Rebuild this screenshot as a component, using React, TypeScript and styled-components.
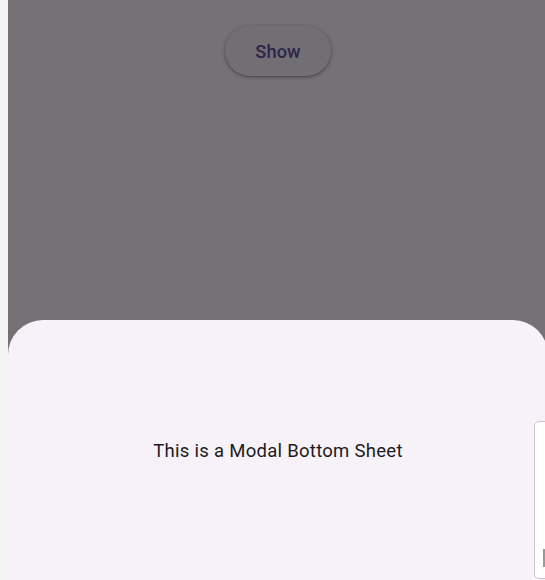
import * as React from 'react';
import styled, { createGlobalStyle } from 'styled-components';

const GlobalStyle = createGlobalStyle`
    html, body {
        margin: 0;
        padding: 0;
        background: #f4f4f4;
        overflow: hidden;
    }
    #root {
        padding-left: 8px;
    }
`;

const Frame = styled.div`
    position: relative;
    display: flex;
    flex-direction: column;
    width: 540px;
    height: 580px;
    overflow: hidden;
    background: #fef7ff;
    font-family: Roboto, "Noto Sans", sans-serif;
`;

const Content = styled.div`
    flex: 1;
    display: flex;
    flex-direction: column;
    align-items: center;
    padding-top: 26px;
`;

const ElevatedButton = styled.button`
    height: 50px;
    padding: 0 30px;
    border: none;
    border-radius: 25px;
    background: #f7f2fa;
    color: #6750a4;
    font-family: Roboto, "Noto Sans", sans-serif;
    font-size: 18.2px;
    font-weight: 500;
    letter-spacing: 0.12px;
    box-shadow: 0 1px 2px rgba(0, 0, 0, 0.3), 0 1px 4px 1px rgba(0, 0, 0, 0.15);
    cursor: pointer;
`;

const Scrim = styled.div`
    position: absolute;
    inset: 0;
    background: rgba(0, 0, 0, 0.54);
`;

const Sheet = styled.div`
    position: relative;
    z-index: 1;
    height: 260px;
    padding-top: 3px;
    box-sizing: border-box;
    background: #f7f2fa;
    border-radius: 35px 35px 0 0;
    display: flex;
    align-items: center;
    justify-content: center;
`;

const SheetText = styled.span`
    font-size: 18.5px;
    line-height: 25px;
    letter-spacing: 0.28px;
    color: #1d1b20;
`;

const EdgeCard = styled.div`
    position: absolute;
    z-index: 2;
    left: 526px;
    top: 421px;
    width: 40px;
    height: 156px;
    background: #ffffff;
    border: 1px solid #c9c6cc;
    border-radius: 5px;
`;

const Caret = styled.div`
    position: absolute;
    left: 8px;
    top: 127px;
    width: 1.5px;
    height: 18px;
    background: #9a9a9a;
`;

export default function App() {
    return (
        <React.Fragment>
            <GlobalStyle />
            <Frame>
                <Content>
                    <ElevatedButton>Show</ElevatedButton>
                </Content>
                <Scrim />
                <Sheet>
                    <SheetText>This is a Modal Bottom Sheet</SheetText>
                </Sheet>
                <EdgeCard>
                    <Caret />
                </EdgeCard>
            </Frame>
        </React.Fragment>
    );
}
